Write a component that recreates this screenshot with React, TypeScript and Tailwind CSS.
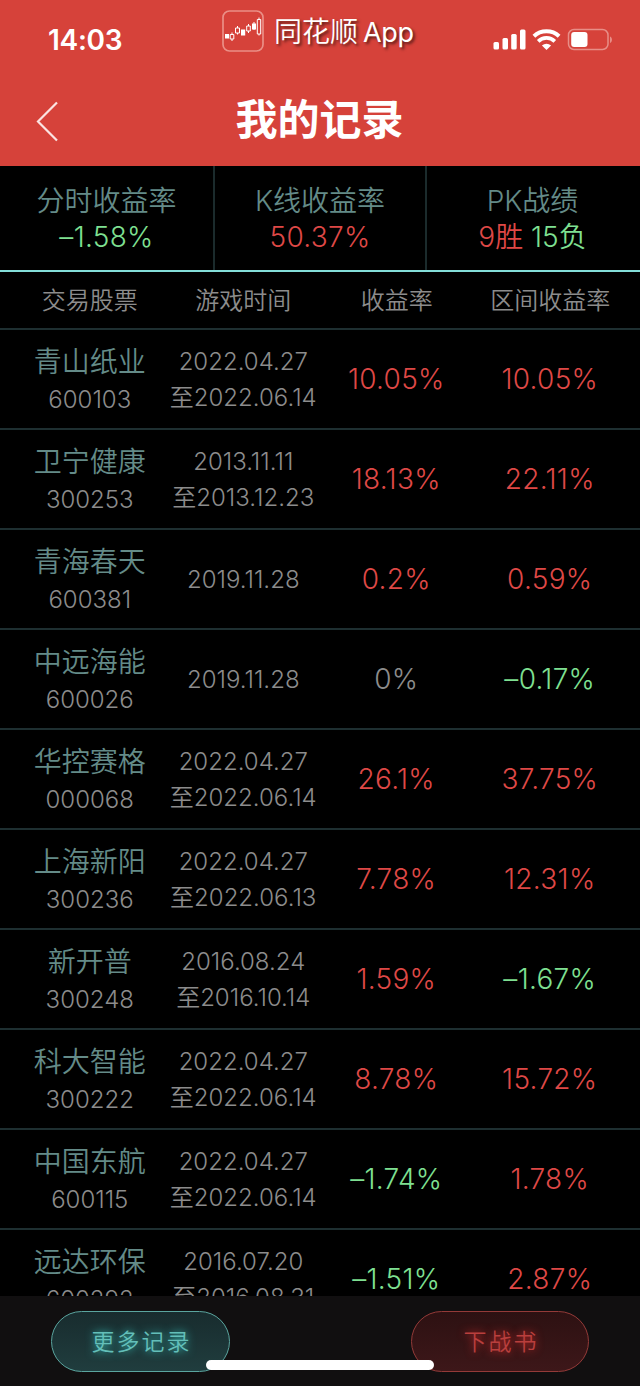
import React from 'react';
import clsx from 'clsx';

interface TradeRecord {
  name: string;
  code: string;
  start: string;
  end?: string;
  profit: string;
  range: string;
}

const RECORDS: TradeRecord[] = [
  { name: '青山纸业', code: '600103', start: '2022.04.27', end: '2022.06.14', profit: '10.05%', range: '10.05%' },
  { name: '卫宁健康', code: '300253', start: '2013.11.11', end: '2013.12.23', profit: '18.13%', range: '22.11%' },
  { name: '青海春天', code: '600381', start: '2019.11.28', profit: '0.2%', range: '0.59%' },
  { name: '中远海能', code: '600026', start: '2019.11.28', profit: '0%', range: '–0.17%' },
  { name: '华控赛格', code: '000068', start: '2022.04.27', end: '2022.06.14', profit: '26.1%', range: '37.75%' },
  { name: '上海新阳', code: '300236', start: '2022.04.27', end: '2022.06.13', profit: '7.78%', range: '12.31%' },
  { name: '新开普', code: '300248', start: '2016.08.24', end: '2016.10.14', profit: '1.59%', range: '–1.67%' },
  { name: '科大智能', code: '300222', start: '2022.04.27', end: '2022.06.14', profit: '8.78%', range: '15.72%' },
  { name: '中国东航', code: '600115', start: '2022.04.27', end: '2022.06.14', profit: '–1.74%', range: '1.78%' },
  { name: '远达环保', code: '600292', start: '2016.07.20', end: '2016.08.31', profit: '–1.51%', range: '2.87%' },
];

const HEADINGS = ['交易股票', '游戏时间', '收益率', '区间收益率'];

const rateColor = (value: string) => {
  if (value.startsWith('–')) return 'text-[#7fe092]';
  if (value === '0%') return 'text-[#8c8c8c]';
  return 'text-[#de4846]';
};

const Rate: React.FC<{ value: string }> = ({ value }) => (
  <span className={clsx('pr-px text-[28px] leading-9 tracking-[0.3px]', rateColor(value))}>{value}</span>
);

const CandleLogo = () => (
  <svg className="w-[42px] h-[42px]" viewBox="0 0 42 42" fill="none">
    <rect x="1" y="1" width="40" height="40" rx="6.5" stroke="#ea8f86" strokeWidth="1.7" />
    <g stroke="#fff" strokeWidth="1">
      <path d="M10 22.5v2M10 29v2M15.5 16v2M15.5 23v1.5M26.5 14v2M26.5 21v2M32 12v8M37 7.5v2M37 24v1.5" />
      <path d="M8.2 24.5h3.6V29H8.2zM13.5 18h4v5h-4zM24.7 16h3.6v5h-3.6zM35.3 9.5h3.4V24h-3.4z" />
    </g>
    <path d="M3 24h4v4.5H3zM19 19.5h4.2v6H19zM30 13.5h4v6h-4z" fill="#fff" />
  </svg>
);

const StatusIcons = () => (
  <svg className="w-[120px] h-[24px]" viewBox="0 0 120 24" fill="none">
    <g fill="#fff">
      <rect x="0.5" y="14" width="5.5" height="7.5" rx="1.5" />
      <rect x="9.5" y="10" width="5.5" height="11.5" rx="1.5" />
      <rect x="18.2" y="6" width="5.5" height="15.5" rx="1.5" />
      <rect x="27" y="1.5" width="5.5" height="20" rx="1.5" />
      <path d="M53.5 22l-4.6-4.6a7 7 0 0 1 9.2 0z" />
    </g>
    <path d="M40.9 8.3a18.5 18.5 0 0 1 25.2 0" stroke="#fff" strokeWidth="4" />
    <path d="M45.2 13.3a12 12 0 0 1 16.6 0" stroke="#fff" strokeWidth="3.7" />
    <rect x="75.5" y="1.5" width="39.5" height="20" rx="5.5" stroke="#e88e87" strokeWidth="1.5" />
    <rect x="78.2" y="4" width="16.3" height="15" rx="3" fill="#fff" />
    <path d="M117 8.5c2.6 1 2.6 5.5 0 6.5z" fill="#e88e87" />
  </svg>
);

const Header = () => (
  <header className="h-[166px] shrink-0 bg-[#d6423a] text-white">
    <div className="flex items-start h-[76px]">
      <span className="w-[222px] pl-12 pt-[22px] text-[28px] leading-9 font-semibold tracking-[-0.3px]">14:03</span>
      <div className="flex items-start gap-[10px] pt-[10px] w-[271px]">
        <CandleLogo />
        <span className="pt-0.5 text-[28px] leading-10 font-[350] whitespace-nowrap [text-shadow:2px_2px_3px_#00000099]">
          同花顺<span className="ml-[5px] font-normal text-[27px] tracking-[-0.3px]">App</span>
        </span>
      </div>
      <div className="pt-[28px]">
        <StatusIcons />
      </div>
    </div>
    <div className="grid grid-cols-[1fr_auto_1fr] items-center h-[90px] pl-9">
      <svg className="w-[24px] h-[42px]" viewBox="0 0 24 42" fill="none">
        <path d="M21 2.5L2 21.5 21 40.5" stroke="#fbe3e1" strokeWidth="2.2" />
      </svg>
      <h1 className="text-[42px] leading-[60px] font-bold -ml-[37px] pb-0.5">我的记录</h1>
    </div>
  </header>
);

const Summary = () => (
  <section className="grid grid-cols-[215px_212px_213px] h-[106px] shrink-0 border-b-2 border-[#83ded9] text-[28px] leading-9 text-center text-[#648b88]">
    <div className="pt-[17px] border-r-2 border-[#1b2b2c]">
      <div>分时收益率</div>
      <div className="text-[#7fe092] tracking-[0.3px]">–1.58%</div>
    </div>
    <div className="pt-[17px] border-r-2 border-[#1b2b2c]">
      <div>K线收益率</div>
      <div className="text-[#de4846] tracking-[0.3px]">50.37%</div>
    </div>
    <div className="pt-[17px] pr-0.5">
      <div>PK战绩</div>
      <div>
        <span className="text-[#de4846]">9胜</span> <span className="text-[#7fe092]">15负</span>
      </div>
    </div>
  </section>
);

const RecordRow: React.FC<{ record: TradeRecord }> = ({ record }) => (
  <div className="grid grid-cols-4 items-center h-[100px] shrink-0 px-[13px] border-b-2 border-[#1e2f31] text-center whitespace-nowrap">
    <div className="flex flex-col pt-0.5">
      <span className="text-[28px] leading-10 text-[#648b88]">{record.name}</span>
      <span className="text-[24px] leading-9 text-[#8c8c8c]">{record.code}</span>
    </div>
    <div className="flex flex-col pt-0.5 text-[24px] leading-9 text-[#8c8c8c]">
      <span>{record.start}</span>
      {record.end && <span>至{record.end}</span>}
    </div>
    <Rate value={record.profit} />
    <Rate value={record.range} />
  </div>
);

const Footer = () => (
  <footer className="relative flex justify-between h-[90px] shrink-0 bg-[#110f10] px-[51px] pt-[15px] text-[23px]">
    <button className="w-[179px] h-[61px] pt-px pl-0.5 rounded-full border border-[#5aa59f] bg-linear-to-b from-[#182c2e] to-[#203d3e] text-[#63bfb9] tracking-[2px] [text-shadow:0_0_8px_#37c8c0]">
      更多记录
    </button>
    <button className="w-[178px] h-[61px] pt-px pl-0.5 rounded-full border border-[#943a38] bg-linear-to-b from-[#2d1112] to-[#3d1719] text-[#b93f3d] tracking-[2px] [text-shadow:0_0_8px_#d52a2a]">
      下战书
    </button>
    <div className="absolute left-[206px] top-[64px] w-[228px] h-[10px] rounded-full bg-white" />
  </footer>
);

export default function App() {
  return (
    <div className="flex flex-col w-[640px] h-[1386px] overflow-hidden bg-black font-[350] font-['Inter','Noto_Sans_CJK_SC',sans-serif]">
      <Header />
      <Summary />
      <div className="grid grid-cols-4 h-[58px] shrink-0 px-[13px] border-b-2 border-[#1e2f31] text-center text-[24px] leading-[58px] text-[#8c8c8c]">
        {HEADINGS.map((heading) => (
          <span key={heading}>{heading}</span>
        ))}
      </div>
      <main className="flex flex-col flex-1 min-h-0 overflow-hidden">
        {RECORDS.map((record) => (
          <RecordRow key={record.code} record={record} />
        ))}
      </main>
      <Footer />
    </div>
  );
}
